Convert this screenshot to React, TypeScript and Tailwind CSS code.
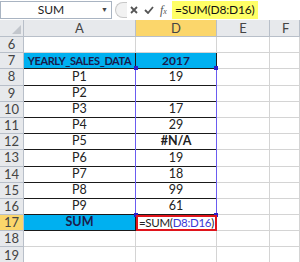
import React from "react";

const ROW_H = "h-[16.2px]";

type Cell = { a?: string; d?: string; kind?: "head" | "data" | "sum" | "empty" };

const rows: { n: number; cell: Cell }[] = [
  { n: 6, cell: { kind: "empty" } },
  { n: 7, cell: { a: "YEARLY_SALES_DATA", d: "2017", kind: "head" } },
  { n: 8, cell: { a: "P1", d: "19", kind: "data" } },
  { n: 9, cell: { a: "P2", d: "", kind: "data" } },
  { n: 10, cell: { a: "P3", d: "17", kind: "data" } },
  { n: 11, cell: { a: "P4", d: "29", kind: "data" } },
  { n: 12, cell: { a: "P5", d: "#N/A", kind: "data" } },
  { n: 13, cell: { a: "P6", d: "19", kind: "data" } },
  { n: 14, cell: { a: "P7", d: "18", kind: "data" } },
  { n: 15, cell: { a: "P8", d: "99", kind: "data" } },
  { n: 16, cell: { a: "P9", d: "61", kind: "data" } },
  { n: 17, cell: { a: "SUM", kind: "sum" } },
  { n: 18, cell: { kind: "empty" } },
  { n: 19, cell: { kind: "empty" } },
];

function FormulaBar() {
  return (
    <div className="flex items-center h-[19px] bg-white">
      <div className="flex items-center w-[112px] h-[18px] border border-[#a9b4c2] bg-white">
        <span className="flex-1 text-center text-[12px] leading-none text-[#222]">SUM</span>
        <span className="w-[10px] text-[7px] text-[#444] leading-none">▼</span>
      </div>
      <div className="ml-[3px] w-[12px] h-[16px] rounded-l-full border border-r-0 border-[#c8c8c8] bg-[#f2f2f2]" />
      <div className="flex items-center gap-[6px] ml-[3px] text-[#555]">
        <svg width="8" height="8" viewBox="0 0 8 8">
          <path d="M1 1L7 7M7 1L1 7" stroke="#555" strokeWidth="1.8" />
        </svg>
        <svg width="10" height="8" viewBox="0 0 10 8">
          <path d="M1 4L4 7L9 1" stroke="#555" strokeWidth="1.8" fill="none" />
        </svg>
        <span className="text-[12px] leading-none italic font-['Liberation_Serif',serif] text-[#555]">
          f<span className="text-[8px]">x</span>
        </span>
      </div>
      <div className="ml-[5px] h-[18px] flex items-center bg-[#ffff66] px-[3px] text-[12px] tracking-[-0.2px] leading-none text-[#111]">
        =SUM(D8:D16)
      </div>
    </div>
  );
}

function ColumnHeader() {
  const base =
    "h-[17px] flex items-center justify-center text-[13px] leading-none text-[#444] border-r border-b border-[#b8bfc9]";
  return (
    <div className="grid grid-cols-[24px_112px_81px_53px_1fr] mt-[1px]">
      <div className={`${base} bg-[#e7e9ec] relative`}>
        <div className="absolute right-[2px] bottom-[2px] w-0 h-0 border-l-[9px] border-l-transparent border-b-[9px] border-b-[#c2c6cc]" />
      </div>
      <div className={`${base} bg-[#e7e9ec]`}>A</div>
      <div className={`${base} bg-[#fbd66b]`}>D</div>
      <div className={`${base} bg-[#e7e9ec]`}>E</div>
      <div className={`${base} bg-[#e7e9ec] justify-start pl-[12px]`}>F</div>
    </div>
  );
}

export default function App() {
  return (
    <div className="w-[300px] h-[262px] overflow-hidden bg-white font-['Lato','Open_Sans',sans-serif]">
      <FormulaBar />
      <ColumnHeader />
      <div className="relative">
        {rows.map(({ n, cell }) => {
          const hdr = n === 17 ? "bg-[#fbd66b]" : "bg-[#e7e9ec]";
          const grid = "border-r border-b border-[#d4d4d4]";
          let aCls = `${grid}`;
          let dCls = `${grid}`;
          if (cell.kind === "head") {
            aCls =
              "bg-[#00b0f0] border-r border-b border-[#1a1a1a] font-bold text-[11px] tracking-[-0.4px] text-[#1b1b4b]";
            dCls = "bg-[#00b0f0] border-r border-b border-[#1a1a1a] font-bold text-[12px] text-[#1b1b4b]";
          } else if (cell.kind === "data") {
            aCls = "border-r border-b border-[#1a1a1a] text-[12.5px] text-[#222]";
            dCls = "border-r border-b border-[#1a1a1a] text-[12.5px] text-[#222]";
          } else if (cell.kind === "sum") {
            aCls = "bg-[#00b0f0] border-r border-b border-[#1a1a1a] font-bold text-[12.5px] text-[#1b1b4b]";
            dCls =
              "border-2 border-[#e0141c] text-[11.5px] tracking-[-0.3px] text-[#222] justify-start pl-[1px] z-10";
          }
          const isP5 = cell.d === "#N/A";
          return (
            <div key={n} className={`grid grid-cols-[24px_112px_81px_53px_1fr] ${ROW_H}`}>
              <div
                className={`${hdr} flex items-center justify-center text-[13px] leading-none text-[#444] border-r border-b border-[#b8bfc9]`}
              >
                {n}
              </div>
              <div
                className={`${aCls} flex items-center justify-center leading-none whitespace-nowrap overflow-hidden`}
              >
                {cell.a}
              </div>
              <div
                className={`${dCls} flex items-center justify-center leading-none ${isP5 ? "font-bold" : ""}`}
              >
                {cell.kind === "sum" ? (
                  <span className="whitespace-nowrap">
                    =SUM(<span className="text-[#3b3bd6]">D8:D16</span>)
                  </span>
                ) : (
                  cell.d
                )}
              </div>
              <div className={grid} />
              <div className={grid} />
            </div>
          );
        })}
        {/* referenced range D8:D16 */}
        <div className="absolute left-[135px] top-[31.4px] w-[82px] h-[146.8px] border-l border-r border-[#6a5cf0] pointer-events-none">
          <div className="absolute -left-[2px] -top-[2px] w-[4px] h-[4px] bg-[#2a20c8]" />
          <div className="absolute -right-[2px] -top-[2px] w-[4px] h-[4px] bg-[#2a20c8]" />
          <div className="absolute -left-[2px] -bottom-[2px] w-[4px] h-[4px] bg-[#2a20c8]" />
          <div className="absolute -right-[2px] -bottom-[2px] w-[4px] h-[4px] bg-[#2a20c8]" />
        </div>
      </div>
    </div>
  );
}
